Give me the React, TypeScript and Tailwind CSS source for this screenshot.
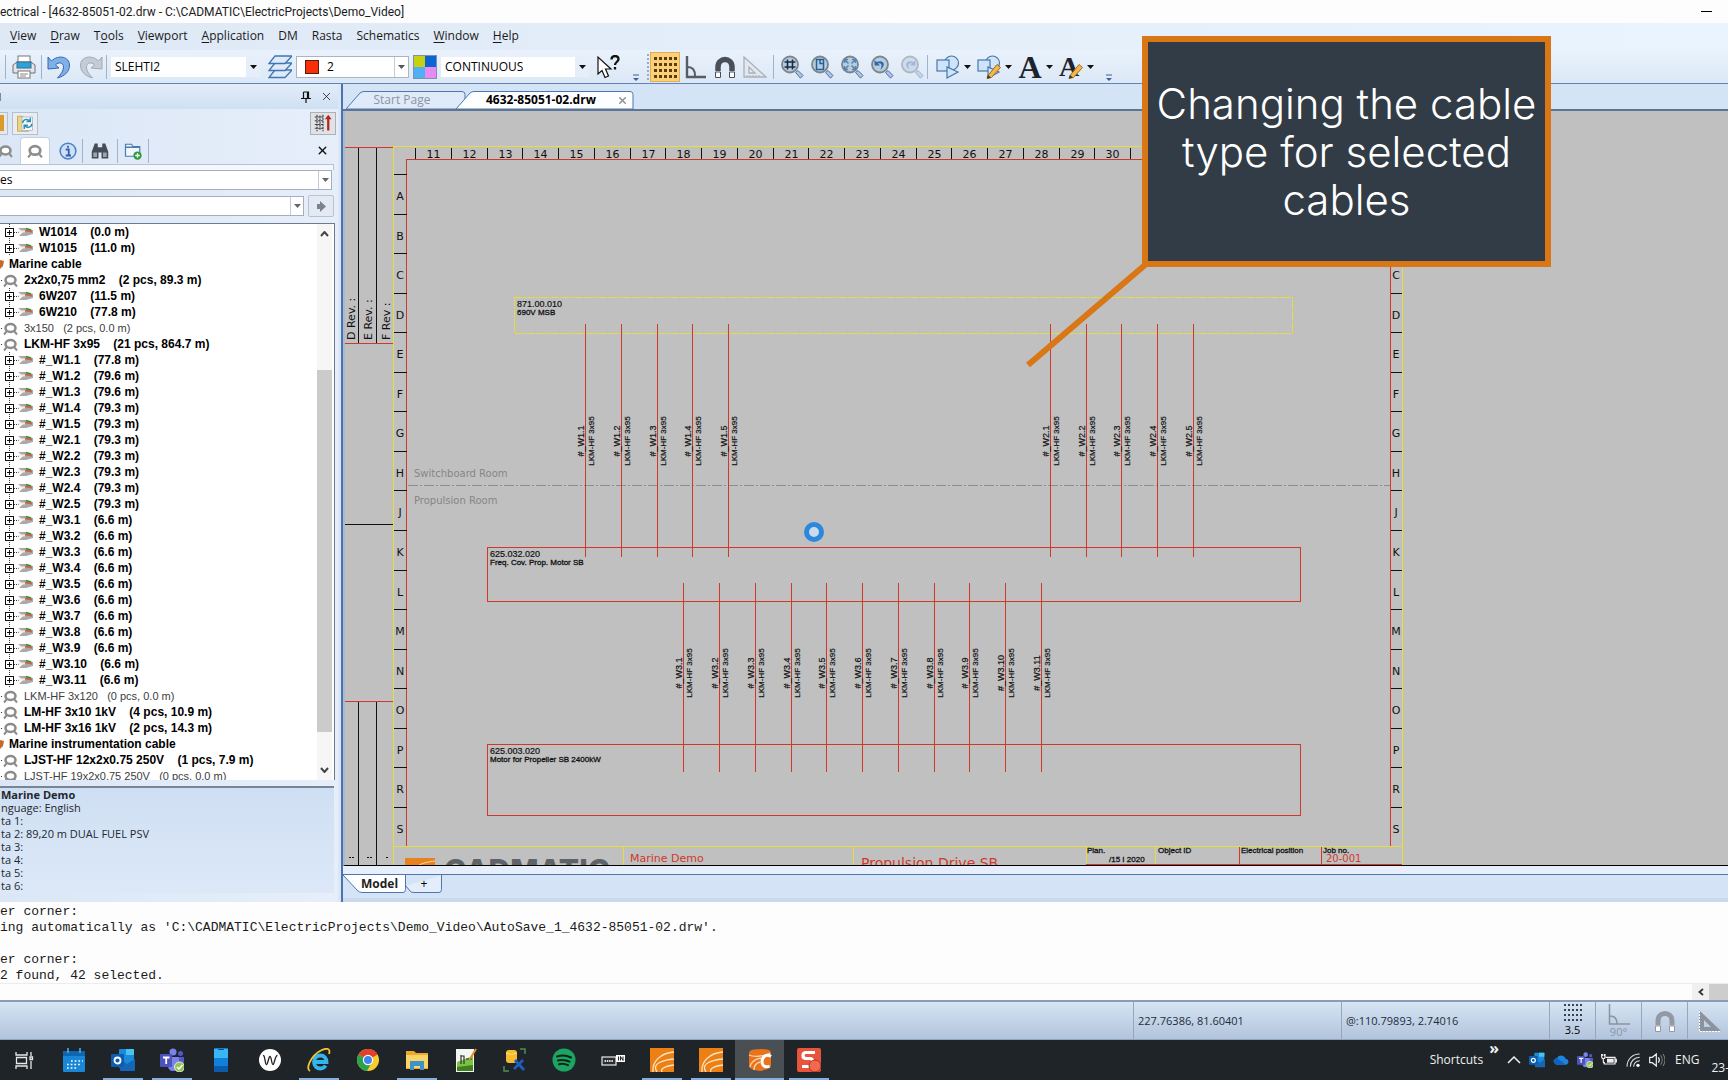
import type { ReactNode } from 'react';
import { X } from 'lucide-react';

const MENUS: [string, string, string][] = [
  ['', 'V', 'iew'],
  ['', 'D', 'raw'],
  ['T', 'o', 'ols'],
  ['', 'V', 'iewport'],
  ['', 'A', 'pplication'],
  ['DM', '', ''],
  ['Rasta', '', ''],
  ['Schematics', '', ''],
  ['', 'W', 'indow'],
  ['', 'H', 'elp'],
];

type Row = { kind: 'group' | 'type' | 'cable'; name: string; info?: string; unused?: boolean };

const cable = (name: string, len: string): Row => ({ kind: 'cable', name, info: `(${len} m)` });

const TREE: Row[] = [
  cable('W1014', '0.0'),
  cable('W1015', '11.0'),
  { kind: 'group', name: 'Marine cable' },
  { kind: 'type', name: '2x2x0,75 mm2', info: '(2 pcs, 89.3 m)' },
  cable('6W207', '11.5'),
  cable('6W210', '77.8'),
  { kind: 'type', name: '3x150', info: '(2 pcs, 0.0 m)', unused: true },
  { kind: 'type', name: 'LKM-HF 3x95', info: '(21 pcs, 864.7 m)' },
  cable('#_W1.1', '77.8'),
  cable('#_W1.2', '79.6'),
  cable('#_W1.3', '79.6'),
  cable('#_W1.4', '79.3'),
  cable('#_W1.5', '79.3'),
  ...[1, 2, 3, 4, 5].map(n => cable(`#_W2.${n}`, '79.3')),
  ...[1, 2, 3, 4, 5, 6, 7, 8, 9, 10, 11].map(n => cable(`#_W3.${n}`, '6.6')),
  { kind: 'type', name: 'LKM-HF 3x120', info: '(0 pcs, 0.0 m)', unused: true },
  { kind: 'type', name: 'LM-HF 3x10 1kV', info: '(4 pcs, 10.9 m)' },
  { kind: 'type', name: 'LM-HF 3x16 1kV', info: '(2 pcs, 14.3 m)' },
  { kind: 'group', name: 'Marine instrumentation cable' },
  { kind: 'type', name: 'LJST-HF 12x2x0.75 250V', info: '(1 pcs, 7.9 m)' },
  { kind: 'type', name: 'LJST-HF 19x2x0.75 250V', info: '(0 pcs, 0.0 m)', unused: true },
];

/* ── Small shared bits ───────────────────────────────────────── */

function Icon({ size = 24, children }: { size?: number; children: ReactNode }) {
  return (
    <svg width={size} height={size} viewBox="0 0 24 24" fill="none" className="shrink-0" aria-hidden>
      {children}
    </svg>
  );
}

function Caret({ color = '#111' }: { color?: string }) {
  return (
    <svg width="7" height="4" viewBox="0 0 7 4" className="shrink-0" aria-hidden>
      <path d="M0 0h7L3.5 4z" fill={color} />
    </svg>
  );
}

function Tool({ label, className = 'w-[30px]', children }: { label: string; className?: string; children: ReactNode }) {
  return (
    <button aria-label={label} className={`flex h-[30px] shrink-0 items-center justify-center gap-1 ${className}`}>
      {children}
    </button>
  );
}

const Sep = () => <span className="h-6 w-px shrink-0 bg-[#9fb3cc]" />;

const Overflow = () => (
  <svg width="8" height="8" viewBox="0 0 8 8" className="shrink-0 self-end" aria-hidden>
    <path d="M1 1h6" stroke="#3f5f96" />
    <path d="M1 4h6L4 7z" fill="#3f5f96" />
  </svg>
);

function Lens({ faded, children }: { faded?: boolean; children: ReactNode }) {
  return (
    <Icon>
      <g opacity={faded ? 0.5 : 1}>
        <path d="M15.500 17.500l2.500-2 5 5-2.500 2.700z" fill="#a9c4e8" stroke="#54709c" />
        <circle cx="10" cy="9.500" r="8" fill="#b9ccdc" stroke="#7b858f" strokeWidth="1.800" />
        {children}
      </g>
    </Icon>
  );
}

const Shapes = () => (
  <g fill="#cfe4f8" stroke="#4478ad" strokeWidth="1.200">
    <circle cx="15.500" cy="8" r="7" />
    <rect x="1" y="5" width="12" height="11" />
    <path d="M11 12v11l11-6z" />
  </g>
);

const Pencil = () => (
  <g>
    <path d="M11 20.500l9-11 3.500 3-9 10-4.500 1z" fill="#f3b84c" stroke="#a06a1c" />
    <path d="M10 23.500l1-3.500 3 2.500z" fill="#333" />
  </g>
);

/* ── Toolbar ─────────────────────────────────────────────────── */

function Toolbar() {
  const dots = [0, 1, 2, 3];
  return (
    <div className="flex h-[34px] shrink-0 items-center border-b border-[#5f84b5] bg-gradient-to-b from-[#e9f2fc] to-[#dce8f6] text-[12px]">
      <div className="flex w-[640px] shrink-0 items-center pl-[5px]">
        <Sep />
        <Tool label="Print" className="w-[35px]">
          <Icon>
            <rect x="6" y="1" width="12" height="8" fill="#fff" stroke="#777" />
            <path d="M1 10l4-3h14l4 3v8H1z" fill="#e3e5e8" stroke="#6c7176" />
            <rect x="5" y="7" width="14" height="6" fill="#2fa0d8" stroke="#39718f" />
            <rect x="6" y="16" width="12" height="7" fill="#fff" stroke="#777" />
            <path d="M8 19h8M8 21h6" stroke="#888" />
          </Icon>
        </Tool>
        <Sep />
        <Tool label="Undo" className="w-[34px]">
          <Icon>
            <path d="M1 2v12l11-1-3.500-3c3-3.500 8-2.500 8 2 0 4-2.500 7-6 11 7-2 12-6 12-13 0-8-11-11-18-4z" fill="#7fb0e8" stroke="#3767ab" />
          </Icon>
        </Tool>
        <Tool label="Redo" className="w-[30px]">
          <Icon>
            <path d="M23 2v12l-11-1 3.500-3c-3-3.500-8-2.500-8 2 0 4 2.500 7 6 11-7-2-12-6-12-13 0-8 11-11 18-4z" fill="#c5ccd6" stroke="#a0a9b6" />
          </Icon>
        </Tool>
        <Sep />
        <div className="relative ml-1 w-[149px]">
          <select aria-label="Layer" className="block h-5 w-full appearance-none bg-white pl-1 font-['Open_Sans',sans-serif] text-[12px] text-black">
            <option>SLEHTI2</option>
          </select>
          <span className="pointer-events-none absolute inset-y-0 right-0 flex w-[14px] items-center justify-center bg-[#e6eefa]"><Caret /></span>
        </div>
        <Tool label="Layers" className="ml-[3px] w-[33px]">
          <Icon>
            <g fill="#dfeaf8" stroke="#4076b5" strokeWidth="1.300">
              <path d="M7 15h17l-7 7.500H1z" />
              <path d="M7 8h17l-7 7.500H1z" />
              <path d="M7 1h17l-7 7.500H1z" />
            </g>
          </Icon>
        </Tool>
        <div className="relative w-[113px]">
          <select aria-label="Color" className="block h-[22px] w-full appearance-none border border-[#a9b4c4] bg-white pl-[30px] font-['Open_Sans',sans-serif] text-[12px] text-black">
            <option>2</option>
          </select>
          <span className="pointer-events-none absolute top-1 left-[9px] size-[14px] border border-[#5a1c10] bg-[#f8300a]" />
          <span className="pointer-events-none absolute inset-y-px right-px flex w-[14px] items-center justify-center border-l border-[#c4cbd6]"><Caret color="#555" /></span>
        </div>
        <button aria-label="Palette" className="mx-1 grid size-6 shrink-0 grid-cols-2 border border-[#7a90b4]">
          <span className="bg-[#c8d012]" />
          <span className="bg-[#0a64d2]" />
          <span className="bg-[#4fb0f5]" />
          <span className="bg-[#e68bf2]" />
        </button>
        <div className="relative w-[148px]">
          <select aria-label="Line type" className="block h-5 w-full appearance-none bg-white pl-1 font-['Open_Sans',sans-serif] text-[12px] text-black">
            <option>CONTINUOUS</option>
          </select>
          <span className="pointer-events-none absolute inset-y-0 right-0 flex w-[14px] items-center justify-center bg-[#e6eefa]"><Caret /></span>
        </div>
        <Tool label="Context help" className="ml-1 w-[30px]">
          <Icon>
            <path d="M2 2v17l4-3.500 3 7 3.500-1.500-3-7H15z" fill="#fff" stroke="#111" strokeWidth="1.200" />
            <path d="M15.500 4.500c0-4.500 7-4.500 7-.5 0 3-3.500 3-3.500 6M19 12v2.500" stroke="#111" strokeWidth="2.300" />
          </Icon>
        </Tool>
        <div className="ml-auto flex h-[30px]"><Overflow /></div>
      </div>

      <div className="flex items-center pl-[7px]">
        <span className="mr-px h-[26px] border-l-2 border-dotted border-[#9aaac0]" />
        <Tool label="Grid" className="w-[30px] border border-[#e0ae52] bg-[#fbd078]">
          <Icon>
            {[0, 1, 2, 3, 4].map(x => dots.map(y => (
              <rect key={`${x}-${y}`} x={1 + x * 5} y={2 + y * 6} width="3" height="3" fill="#5a3c08" />
            )))}
          </Icon>
        </Tool>
        <Tool label="Ortho">
          <Icon>
            <path d="M4 1v21h19" stroke="#585c64" strokeWidth="2.400" />
            <path d="M5 12c5 0 7 4 7 9" stroke="#585c64" strokeWidth="2" />
          </Icon>
        </Tool>
        <Tool label="Snap">
          <Icon>
            <path d="M5 16v-4c0-10 14-10 14 0v4" stroke="#4b5058" strokeWidth="5.500" />
            <path d="M2.500 17h5v5.500h-5zM16.500 17h5v5.500h-5z" fill="#fff" stroke="#4b5058" />
          </Icon>
        </Tool>
        <Tool label="Set square">
          <Icon>
            <path fillRule="evenodd" d="M1 2v20h22zM6 12v6h6z" fill="#e3e8ef" stroke="#a9b1bd" strokeWidth="1.300" />
            <path d="M4 22v-2m3 2v-2m3 2v-2m3 2v-2m3 2v-2" stroke="#a9b1bd" />
          </Icon>
        </Tool>
        <span className="mr-[3px] ml-[3px] flex"><Sep /></span>
        <Tool label="Zoom window">
          <Lens><path d="M7.500 4.500v10m5-10v10m-8-7.500h11m-11 5h11" stroke="#1b2c45" strokeWidth="1.600" /></Lens>
        </Tool>
        <Tool label="Zoom page">
          <Lens><path d="M6.500 4.500h7v10h-7zM10 4.500v4h3.500" stroke="#23619a" strokeWidth="1.500" /></Lens>
        </Tool>
        <Tool label="Zoom extents">
          <Lens><path d="M5 5l3.500 3.500M15 5l-3.500 3.500M5 14l3.500-3.500M15 14l-3.500-3.500M4.500 8V4.500H8M12 4.500h3.500V8M4.500 11v3.500H8M12 14.500h3.500V11" stroke="#5485b5" strokeWidth="1.500" /></Lens>
        </Tool>
        <Tool label="Zoom previous">
          <Lens><path d="M4.500 5v5.500H10L8 8.500c4-1.500 4.500 3 2 6.500 6-4 5-11-3.500-8z" fill="#2c6aac" /></Lens>
        </Tool>
        <Tool label="Zoom next">
          <Lens faded><path d="M15.500 5v5.500H10l2-2c-4-1.500-4.500 3-2 6.500-6-4-5-11 3.500-8z" fill="#6a7fb8" /></Lens>
        </Tool>
        <Sep />
        <Tool label="Shapes" className="ml-[5px] w-[41px]"><Icon><Shapes /></Icon><Caret /></Tool>
        <Tool label="Edit shapes" className="w-[41px]"><Icon><Shapes /><Pencil /></Icon><Caret /></Tool>
        <Tool label="Text" className="w-[41px]">
          <span className="w-6 text-center font-['Liberation_Serif',serif] text-[32px] leading-6 font-bold text-[#1c232c]">A</span><Caret />
        </Tool>
        <Tool label="Edit text" className="w-[41px]">
          <span className="relative w-6 text-left font-['Liberation_Serif',serif] text-[28px] leading-6 font-bold text-[#1c232c]">
            A
            <span className="absolute inset-0"><Icon><Pencil /></Icon></span>
          </span>
          <Caret />
        </Tool>
        <div className="ml-2 flex h-[30px]"><Overflow /></div>
      </div>
    </div>
  );
}

/* ── Project panel ───────────────────────────────────────────── */

const Ring = () => (
  <g>
    <path d="M6.500 11.500l-2.500 3M14.500 11.500l2.500 3" stroke="#8d8d8d" strokeWidth="2" />
    <ellipse cx="10.500" cy="8" rx="5" ry="4" fill="#fff" stroke="#8d8d8d" strokeWidth="2.600" />
  </g>
);

function TreeRow({ row }: { row: Row }) {
  return (
    <li className="flex h-4 items-center whitespace-pre">
      {row.kind === 'cable' && (
        <svg width="39" height="16" viewBox="0 0 39 16" fill="none" className="shrink-0" aria-hidden>
          <path d="M9.500 0v16M14 8.500h5" stroke="#333" strokeDasharray="1 1" />
          <rect x="5.500" y="4.500" width="8" height="8" fill="#fff" stroke="#111" shapeRendering="crispEdges" />
          <path d="M7 8.500h5M9.500 6v5" stroke="#111" shapeRendering="crispEdges" />
          <path d="M18 4h8l7 2v4l-7 2h-7l4-4z" fill="#a9aaa8" />
          <path d="M18 7.500h7" stroke="#eee" strokeWidth="2" />
          <path d="M25 6.500l7 1" stroke="#c26b4c" strokeWidth="2" />
          <path d="M26 4.500l5 1.500" stroke="#3f8a3a" strokeWidth="1.500" />
        </svg>
      )}
      {row.kind === 'type' && (
        <svg width="24" height="16" viewBox="0 0 24 16" fill="none" className="shrink-0" aria-hidden>
          <path d="M1 8.500h2" stroke="#333" strokeDasharray="1 1" />
          <Ring />
        </svg>
      )}
      {row.kind === 'group' && (
        <svg width="9" height="16" viewBox="0 0 9 16" className="shrink-0" aria-hidden>
          <path d="M0 4l4 1-1 5-3 3z" fill="#c8672a" />
        </svg>
      )}
      {row.unused
        ? <span className="text-[11px] text-[#3d3d3d]">{`${row.name}   ${row.info}`}</span>
        : <span className="font-bold text-black">{row.info ? `${row.name}    ${row.info}` : row.name}</span>}
    </li>
  );
}

function ProjectPanel() {
  return (
    <aside className="flex w-[338px] shrink-0 flex-col bg-gradient-to-r from-[#dbe7f6] to-[#e6eefa] font-['Open_Sans',sans-serif] text-[12px]">
      <div className="flex h-[25px] shrink-0 items-center gap-[9px] bg-gradient-to-b from-[#e2edf9] to-[#cfe0f3] pr-[5px]">
        <span className="h-2 w-px bg-[#7a8ba3]" />
        <button aria-label="Pin" className="ml-auto">
          <svg width="10" height="12" viewBox="0 0 10 12" fill="none" aria-hidden>
            <path d="M2.500 1h5v6M2.500 1v6M0 7.500h10M5 8v4M6.500 1v6" stroke="#111" strokeWidth="1.200" />
          </svg>
        </button>
        <button aria-label="Close panel"><X size={13} strokeWidth={1.400} color="#111" /></button>
      </div>

      <div className="flex h-7 shrink-0 items-center pr-[2px]">
        <button aria-label="Open" className="h-[23px] w-2 border border-l-0 border-[#b7bfca] bg-[#e4e8ee]"><span className="block h-4 w-1 bg-[#d99c2b]" /></button>
        <button aria-label="Reload" className="ml-1 flex h-[23px] w-[26px] items-center justify-center border border-[#b7bfca] bg-[#e9edf3]">
          <Icon size={18}>
            <path d="M2 3h7l2 2h6v18H2z" fill="#ecd487" stroke="#bd9c40" />
            <rect x="8" y="4" width="14" height="18" fill="#f5f9fc" stroke="#9fb1c0" />
            <path d="M9 12c0-5 6-6 9-3M21 13c0 5-6 6-9 3M19 5v5h-5M11 20v-5h5" stroke="#2f8fb0" strokeWidth="2" />
          </Icon>
        </button>
        <button aria-label="Sort" className="ml-auto flex h-[23px] w-[26px] items-center justify-center border border-[#b0b0b0] bg-[#dfe2e6]">
          <Icon size={18}>
            <path d="M4 1v22M1 4h12M1 9h12M1 14h12M1 19h12M12 1v22M8 2v20" stroke="#444" strokeDasharray="3 1" strokeWidth="1.500" />
            <path d="M17.500 22V7h-3L19 1l4.500 6h-3v15z" fill="#b5231c" />
          </Icon>
        </button>
      </div>

      <div className="flex h-[27px] shrink-0 items-center">
        <button aria-label="Cables" className="w-[20px]">
          <svg width="18" height="18" viewBox="5 0 18 17" fill="none" aria-hidden><Ring /></svg>
        </button>
        <button aria-label="Cable types" className="flex h-full w-[30px] items-center justify-center rounded-t border border-b-0 border-[#c6cfdb] bg-white">
          <svg width="18" height="18" viewBox="2 0 17 17" fill="none" aria-hidden><Ring /></svg>
        </button>
        <button aria-label="Info" className="flex w-8 items-center justify-center pl-1">
          <Icon size={18}>
            <circle cx="12" cy="12" r="10.500" fill="#cfdff6" stroke="#4d7fc4" strokeWidth="2" />
            <path d="M9 10h4v8M9 18h7M12 5v2.500" stroke="#2f5fae" strokeWidth="2.400" />
          </Icon>
        </button>
        <Sep />
        <button aria-label="Find" className="flex w-[34px] items-center justify-center">
          <Icon size={18}>
            <path d="M5 2h4v5h6V2h4l4 11v9h-9v-8h-4v8H1v-9z" fill="#454c56" />
            <path d="M3 14h5v6H3zM16 14h5v6h-5z" fill="#98a2b0" />
          </Icon>
        </button>
        <Sep />
        <button aria-label="New folder" className="flex w-[30px] items-center justify-center">
          <Icon size={18}>
            <path d="M2 3h8l2 3h9v13H2z" fill="#f2f7fc" stroke="#4a7bb0" strokeWidth="1.600" />
            <path d="M2 7h19" stroke="#4a7bb0" strokeWidth="2" />
            <circle cx="18" cy="18" r="5.500" fill="#2e9a3a" />
            <path d="M15 18h6M18 15v6" stroke="#fff" strokeWidth="1.800" />
          </Icon>
        </button>
        <Sep />
        <button aria-label="Close tabs" className="mr-[9px] ml-auto"><X size={13} strokeWidth={2.600} color="#111" /></button>
      </div>

      <div className="mr-1 h-[6px] shrink-0 border-t border-r border-[#b7c3d4] bg-[#f4f8fd]" />
      <div className="relative mr-[6px]">
        <select aria-label="View" className="block h-5 w-full appearance-none border border-l-0 border-[#a5aebb] bg-white text-[12px] text-black">
          <option>es</option>
        </select>
        <span className="pointer-events-none absolute inset-y-px right-px flex w-[13px] items-center justify-center border-l border-[#c4cbd6]"><Caret color="#666" /></span>
      </div>
      <div className="mt-[5px] flex shrink-0 items-center gap-1">
        <div className="relative w-[304px]">
          <input aria-label="Filter" className="block h-5 w-full border border-l-0 border-[#a5aebb] bg-white" />
          <span className="pointer-events-none absolute inset-y-px right-px flex w-[13px] items-center justify-center border-l border-[#c4cbd6]"><Caret color="#666" /></span>
        </div>
        <button aria-label="Go" className="flex h-[22px] w-[26px] items-center justify-center rounded-xs border border-[#b9c2cf] bg-[#e4eaf3]">
          <svg width="9" height="11" viewBox="0 0 9 11" aria-hidden><path d="M0 3h3V0l6 5.500L3 11V8H0z" fill="#7c828b" /></svg>
        </button>
      </div>

      <div className="mt-[6px] mr-[3px] flex min-h-0 flex-1 border-t border-r border-[#6f7b8a] bg-white font-['Liberation_Sans',sans-serif]">
        <ul className="min-w-0 flex-1 overflow-hidden">
          {TREE.map(row => <TreeRow key={row.name} row={row} />)}
        </ul>
        <div className="mr-[2px] flex w-[15px] flex-col items-center bg-[#f6f6f6] py-[7px]">
          <svg width="9" height="6" viewBox="0 0 9 6" fill="none" aria-hidden><path d="M1 5l3.500-4L8 5" stroke="#444" strokeWidth="2" /></svg>
          <div className="mt-[133px] h-[362px] w-full bg-[#cbcbcb]" />
          <svg width="9" height="6" viewBox="0 0 9 6" fill="none" className="mt-auto" aria-hidden><path d="M1 1l3.500 4L8 1" stroke="#444" strokeWidth="2" /></svg>
        </div>
      </div>

      <div className="mt-[6px] mr-1 mb-[9px] shrink-0 border-t-2 border-[#7a8493] bg-gradient-to-b from-[#cfdff3] to-[#dce8f8] pb-px pl-px text-[11px] leading-[13px] text-[#22272e]">
        <p className="font-bold">Marine Demo</p>
        <p>nguage: English</p>
        <p>ta 1:</p>
        <p>ta 2: 89,20 m DUAL FUEL PSV</p>
        <p>ta 3:</p>
        <p>ta 4:</p>
        <p>ta 5:</p>
        <p>ta 6:</p>
      </div>
    </aside>
  );
}

/* ── Drawing sheet ───────────────────────────────────────────── */

const RED = '#d0392a';
const YELLOW = '#e6de3c';
const ROW_LETTERS = 'ABCDEFGHJKLMNOPRS'.split('');
const COL_PITCH = 35.76;
const ROW_PITCH = 39.55;

function CableLine({ x, y1, y2, mid, name }: { x: number; y1: number; y2: number; mid: number; name: string }) {
  return (
    <g>
      <path d={`M${x} ${y1}V${y2}`} stroke={RED} shapeRendering="crispEdges" />
      <g textAnchor="middle" stroke="#111" strokeWidth="0.200">
        <text fontSize="9" transform={`translate(${x - 2} ${mid}) rotate(-90)`}>{name}</text>
        <text fontSize="8" transform={`translate(${x + 8} ${mid}) rotate(-90)`}>LKM-HF 3x95</text>
      </g>
    </g>
  );
}

function Sheet() {
  return (
    <svg
      viewBox="345 111 1383 754"
      preserveAspectRatio="xMinYMin slice"
      className="block h-full w-full font-['Liberation_Sans',sans-serif]"
      fill="#111"
      role="img"
      aria-label="Cable diagram"
    >
      {/* revision columns */}
      <g stroke="#111" shapeRendering="crispEdges">
        <path d="M358.500 147v196M376.500 147v196M358.500 701v164M376.500 701v164M345 524.500h48" />
      </g>
      <g stroke={RED} fill="none" shapeRendering="crispEdges">
        <path d="M345 147.500h48M345 343.500h48M345 701.500h48" />
        <path d="M406.500 847V159.500H1390.500V847" />
      </g>
      <g fontSize="11" className="font-['DejaVu_Sans',sans-serif]">
        <text transform="translate(355 340) rotate(-90)">D Rev. :</text>
        <text transform="translate(372 340) rotate(-90)">E Rev. :</text>
        <text transform="translate(390 340) rotate(-90)">F Rev :</text>
      </g>
      <path d="M349 857.500h5M367 857.500h5M386 857.500h2" stroke="#111" strokeDasharray="2 1" />

      {/* outer frame and title block rules */}
      <g stroke={YELLOW} fill="none" shapeRendering="crispEdges">
        <path d="M393.500 866V146.500H1402.500V866M393 846.500H1403M623.500 847v18M853.500 847v18M1086.500 847v18M1155.500 847v18" />
        <rect x="514.500" y="297.500" width="778" height="36" strokeDasharray="8 1 2 1" />
      </g>

      {/* column numbers */}
      <g fontSize="11" textAnchor="middle" className="font-['DejaVu_Sans',sans-serif]">
        {Array.from({ length: 20 }, (_, i) => {
          const x = Math.round(415 + i * COL_PITCH) + 0.5;
          return (
            <g key={i}>
              <path d={`M${x} 148v11`} stroke="#111" shapeRendering="crispEdges" />
              <text x={x + 18} y="158">{11 + i}</text>
            </g>
          );
        })}
        <path d="M1130.500 148v11" stroke="#111" shapeRendering="crispEdges" />
      </g>

      {/* row letters, both sides */}
      <g fontSize="11" textAnchor="middle" className="font-['DejaVu_Sans',sans-serif]">
        {ROW_LETTERS.map((letter, i) => {
          const y = Math.round(174 + i * ROW_PITCH) + 0.5;
          return (
            <g key={letter}>
              <path d={`M394 ${y}h13M1391 ${y}h11`} stroke="#111" shapeRendering="crispEdges" />
              <text x="400" y={y + 25}>{letter}</text>
              {i > 1 && <text x="1396" y={y + 25}>{letter}</text>}
            </g>
          );
        })}
      </g>

      {/* room divider */}
      <path d="M408 485.500H1390" stroke="#8d8d8d" strokeDasharray="10 2 2 2" />
      <g fontSize="10" fill="#868686" className="font-['DejaVu_Sans',sans-serif]">
        <text x="414" y="477">Switchboard Room</text>
        <text x="414" y="504">Propulsion Room</text>
      </g>

      {/* equipment */}
      <g stroke={RED} fill="none" shapeRendering="crispEdges">
        <rect x="487.500" y="547.500" width="813" height="54" />
        <rect x="487.500" y="744.500" width="813" height="71" />
      </g>
      <g fontSize="9" stroke="#111" strokeWidth="0.200">
        <text x="517" y="307">871.00.010</text>
        <text x="490" y="557">625.032.020</text>
        <text x="490" y="754">625.003.020</text>
      </g>
      <g fontSize="8" stroke="#111" strokeWidth="0.300">
        <text x="517" y="315">690V MSB</text>
        <text x="490" y="565">Freq. Cov. Prop. Motor SB</text>
        <text x="490" y="762">Motor for Propeller SB 2400kW</text>
      </g>

      {[585, 621, 657, 692, 728].map((x, i) => (
        <CableLine key={x} x={x + 0.5} y1={324} y2={557} mid={441} name={`#_W1.${i + 1}`} />
      ))}
      {[1050, 1086, 1121, 1157, 1193].map((x, i) => (
        <CableLine key={x} x={x + 0.5} y1={324} y2={557} mid={441} name={`#_W2.${i + 1}`} />
      ))}
      {[683, 719, 755, 791, 826, 862, 898, 934, 969, 1005, 1041].map((x, i) => (
        <CableLine key={x} x={x + 0.5} y1={583} y2={772} mid={673} name={`#_W3.${i + 1}`} />
      ))}

      {/* title block */}
      <path d="M405 858h30v7h-30z" fill="#e8821e" />
      <path d="M418 866c4-3 9-4 17-5" stroke="#f6d9b5" fill="none" />
      <text x="444" y="881" fontSize="30" fontWeight="800" fill="#5f6266" className="font-['Inter',sans-serif]">CADMATIC</text>
      <g fill={RED} className="font-['DejaVu_Sans',sans-serif]">
        <text x="630" y="862" fontSize="11">Marine Demo</text>
        <text x="861" y="868" fontSize="14">Propulsion Drive SB</text>
        <text x="1326" y="862" fontSize="10">20-001</text>
      </g>
      <g fontSize="8" stroke="#111" strokeWidth="0.300">
        <text x="1087" y="853">Plan.</text>
        <text x="1109" y="862">/15 I 2020</text>
        <text x="1158" y="853">Object ID</text>
        <text x="1241" y="853">Electrical position</text>
        <text x="1323" y="853">Job no.</text>
      </g>
      <path d="M1086 864.500H1402M1239.500 847v18M1321.500 847v18" stroke={RED} shapeRendering="crispEdges" />

      {/* busy cursor */}
      <circle cx="814" cy="532" r="7.500" fill="#c9dcec" stroke="#2d87dc" strokeWidth="5" />
    </svg>
  );
}

function Workspace() {
  return (
    <main className="flex min-w-0 flex-1 flex-col border-l-2 border-[#4a74b0] bg-[#d5e3f7] font-['Open_Sans',sans-serif] text-[12px]">
      <div className="flex h-[27px] shrink-0 items-end border-b-2 border-[#5c7596] pl-[3px]">
        <button className="relative h-[18px] w-[120px] pr-2 text-[#8d949e]">
          <svg viewBox="0 0 120 18" preserveAspectRatio="none" className="absolute inset-0 h-full w-full" aria-hidden>
            <path d="M0 18L14 2q2-1.500 4-1.500h98q3 0 3 3V18z" fill="#dfeafa" stroke="#4d78ae" />
          </svg>
          <span className="relative">Start Page</span>
        </button>
        <button className="relative -ml-[10px] flex h-[18px] w-[178px] items-center pl-[30px] font-bold text-black">
          <svg viewBox="0 0 178 18" preserveAspectRatio="none" className="absolute inset-0 h-full w-full" aria-hidden>
            <path d="M0 18L14 2q2-1.500 4-1.500h156q3 0 3 3V18z" fill="#fdfeff" stroke="#4d78ae" />
          </svg>
          <span className="relative">4632-85051-02.drw</span>
          <X size={11} strokeWidth={3} color="#8b8f96" className="relative mr-[6px] ml-auto" />
        </button>
      </div>
      <div className="min-h-0 flex-1 overflow-hidden border-b border-l-2 border-b-black border-l-[#a9b9d0] bg-[#c0c0c0]"><Sheet /></div>
      <div className="h-[9px] shrink-0 border-b border-[#4d78ae] bg-[#e6effb]" />
      <div className="flex h-[27px] shrink-0 items-start border-b-4 border-[#cbd9ea]">
        <button className="relative h-[18px] w-[63px] pl-[10px] font-bold text-[#222]">
          <svg viewBox="0 0 63 18" preserveAspectRatio="none" className="absolute inset-0 h-full w-full" aria-hidden>
            <path d="M0 0l14 15q2 2.500 5 2.500h41q2.500 0 2.500-3V0" fill="#fff" stroke="#4d78ae" />
          </svg>
          <span className="relative">Model</span>
        </button>
        <button aria-label="Add layout" className="relative h-[18px] w-9 text-black">
          <svg viewBox="0 0 36 18" preserveAspectRatio="none" className="absolute inset-0 h-full w-full" aria-hidden>
            <path d="M0 11l4 5q1 1.500 4 1.500h25q2.500 0 2.500-3V0" fill="#e3edfb" stroke="#4d78ae" />
          </svg>
          <span className="relative">+</span>
        </button>
      </div>
    </main>
  );
}

/* ── Console and status bar ──────────────────────────────────── */

function Console() {
  return (
    <section className="h-[100px] shrink-0 border-b-2 border-[#8a9db6] bg-[#fdfdfd]">
      <pre className="h-[82px] overflow-hidden border-b border-[#ececec] pt-[2px] font-['Liberation_Mono',monospace] text-[13px] leading-4 text-[#1a1a1a]">
        {`er corner:
ing automatically as 'C:\\CADMATIC\\ElectricProjects\\Demo_Video\\AutoSave_1_4632-85051-02.drw'.

er corner:
2 found, 42 selected.`}
      </pre>
      <div className="flex h-4 justify-end">
        <button aria-label="Scroll left" className="flex w-[17px] items-center justify-center bg-[#f0f0f0]">
          <svg width="6" height="8" viewBox="0 0 6 8" fill="none" aria-hidden><path d="M5 1L1.500 4 5 7" stroke="#333" strokeWidth="1.800" /></svg>
        </button>
        <span className="w-[19px] bg-[#cdcdcd]" />
      </div>
    </section>
  );
}

function StatusBar() {
  const cell = 'flex h-full flex-col items-center justify-center border-l border-[#93a7c2]';
  return (
    <footer className="flex h-[38px] shrink-0 items-center justify-end overflow-hidden border-b border-[#8ea3bd] bg-gradient-to-b from-[#d6e4f3] to-[#b2c4dc] font-['Open_Sans',sans-serif] text-[11px] text-[#1f2c3d]">
      <span className="flex h-full w-[208px] shrink-0 items-center border-l border-[#93a7c2] pt-[2px] pl-1">227.76386, 81.60401</span>
      <span className="flex h-full w-[208px] shrink-0 items-center border-l border-[#93a7c2] pt-[2px] pl-1">@:110.79893, 2.74016</span>
      <button className={`${cell} w-[46px] shrink-0`}>
        <svg width="18" height="18" viewBox="0 0 18 18" aria-hidden>
          {[0, 1, 2, 3, 4].map(x => [0, 1, 2, 3].map(y => (
            <rect key={`${x}-${y}`} x={x * 4} y={y * 5} width="2" height="2" fill="#39424f" />
          )))}
        </svg>
        <span className="leading-4 text-black">3.5</span>
      </button>
      <button className={`${cell} w-[46px] shrink-0 text-[#8a95a5]`}>
        <svg width="22" height="22" viewBox="0 0 22 22" fill="none" aria-hidden>
          <path d="M1.500 0v20H22M2 12c5 0 7 3 7 8" stroke="#8a93a0" strokeWidth="1.500" />
        </svg>
        <span className="leading-3">90°</span>
      </button>
      <button aria-label="Object snap" className={`${cell} w-[46px] shrink-0`}>
        <Icon>
          <path d="M5 16v-4c0-10 14-10 14 0v4" stroke="#9399a2" strokeWidth="5" />
          <path d="M2.500 17h5v5.500h-5zM16.500 17h5v5.500h-5z" fill="#fff" stroke="#9399a2" />
        </Icon>
      </button>
      <button aria-label="Set square" className={`${cell} w-[41px] shrink-0 pl-1`}>
        <Icon>
          <path fillRule="evenodd" d="M1 1v21h22zM6 11v7h7z" fill="#8c939e" />
          <path d="M1.500 2v20.500H22" stroke="#fff" strokeDasharray="2 1" />
        </Icon>
      </button>
    </footer>
  );
}

/* ── Taskbar ─────────────────────────────────────────────────── */

const OutlookArt = () => (
  <>
    <rect x="8" y="1" width="15" height="19" rx="1" fill="#1b8ad8" />
    <path d="M15 1h7q1 0 1 1v5h-8z" fill="#4cc2f2" />
    <path d="M9 11l7 5 8-5v11q0 1-1 1H10q-1 0-1-1z" fill="#1566b5" />
    <rect x="0" y="6" width="13" height="13" rx="1" fill="#0d5cb0" />
    <circle cx="6.500" cy="12.500" r="3" stroke="#fff" strokeWidth="1.800" />
  </>
);

const TeamsArt = () => (
  <>
    <circle cx="13" cy="4" r="3.500" fill="#7b83eb" />
    <circle cx="20.500" cy="5.500" r="2.500" fill="#5059c9" />
    <path d="M16 9h8v7q-1 4-6 4z" fill="#5059c9" />
    <path d="M8 9h11v8q0 6-6 6-5 0-5-6z" fill="#7b83eb" />
    <rect x="0" y="6" width="12" height="13" rx="1" fill="#4b53bc" />
    <path d="M3 9.500h6.500M6.200 9.500V16" stroke="#fff" strokeWidth="1.800" />
    <circle cx="19.500" cy="19" r="5" fill="#92c353" stroke="#e8f2da" />
    <path d="M17 19l2 2 3.500-4" stroke="#fff" strokeWidth="1.500" />
  </>
);

const CadArt = () => (
  <>
    <rect width="24" height="24" fill="#ec8014" />
    <path d="M3 24C2 14 10 5 24 4M7 24C1 15 14 12 24 11M12 24c-2-3 3-6 12-7" stroke="#fde4c4" strokeWidth="1.300" />
  </>
);

type TaskItem = { label: string; open?: boolean; active?: boolean; art: ReactNode };

const TASKS: TaskItem[] = [
  {
    label: 'Task View',
    art: <path d="M3 4v3h11V4M3 21v-3h11v3M3.500 9.500h10v6h-10zM18 4v4M18 13v8M17 9h2.500v2.500H17z" stroke="#e8e8e8" strokeWidth="1.300" />,
  },
  {
    label: 'Calendar',
    art: (
      <>
        <rect x="1" y="3" width="22" height="21" rx="1" fill="#1a86d6" />
        <path d="M1 3h22v5H1z" fill="#0f65b0" />
        <path d="M6 0v5M18 0v5" stroke="#52b4ee" strokeWidth="1.500" />
        <path d="M9 13h12M5 16.500h14M5 20h11" stroke="#fff" strokeWidth="1.700" strokeDasharray="1.700 2" />
      </>
    ),
  },
  { label: 'Outlook', open: true, art: <OutlookArt /> },
  { label: 'Teams', open: true, art: <TeamsArt /> },
  {
    label: 'Your Phone',
    art: (
      <>
        <rect x="5" y="0" width="14" height="24" rx="1" fill="#1180d8" />
        <path d="M5 1h14v9H5z" fill="#3bb6f5" />
        <path d="M5 18h14v6H5z" fill="#0a5cab" />
        <path d="M9 1.500h6" stroke="#0a4d90" />
      </>
    ),
  },
  {
    label: 'W app',
    art: (
      <>
        <circle cx="12" cy="12" r="11" fill="#fff" />
        <path d="M5 7.500c2-1 2 9 3.500 9s2-8 3.500-8 1.500 8 3 8S17 7 19.500 7.500" stroke="#222" strokeWidth="1.300" />
      </>
    ),
  },
  {
    label: 'Internet Explorer',
    open: true,
    art: (
      <>
        <path d="M6 14h13.500c0-4-2.500-6.500-6-6.500S7 10 7 14s3 6.500 6.500 6.500c2.500 0 4-1 5-3" stroke="#35b5ee" strokeWidth="3.800" />
        <path d="M3 23c-5-2 1-15 10-20 6-3.500 11-3 9 3" stroke="#f3c433" strokeWidth="1.800" />
      </>
    ),
  },
  {
    label: 'Chrome',
    art: (
      <>
        <circle cx="12" cy="12" r="11" fill="#f8cb2e" />
        <path d="M12 12L2.500 6.500A11 11 0 0 1 21.500 6.500z" fill="#e0412f" />
        <path d="M12 12L2.500 6.500A11 11 0 0 0 11 23l5-9z" fill="#2ba24c" />
        <path d="M12 7h9.800A11 11 0 0 0 12 1z" fill="#e0412f" />
        <circle cx="12" cy="12" r="5.200" fill="#fff" />
        <circle cx="12" cy="12" r="4" fill="#4284f0" />
      </>
    ),
  },
  {
    label: 'File Explorer',
    open: true,
    art: (
      <>
        <path d="M1 3h8l2 2h12v16H1z" fill="#f0a92c" />
        <path d="M1 7h22v13H1z" fill="#fbd468" />
        <path d="M5 13h14v9h-4v-4H9v4H5z" fill="#3d94cc" />
      </>
    ),
  },
  {
    label: 'Notepad++',
    art: (
      <>
        <rect x="2" y="1" width="18" height="23" fill="#f4f6f2" />
        <path d="M3 14l16-6v15H3z" fill="#7cc342" />
        <path d="M3 19l16-2v6H3z" fill="#3f7f22" />
        <path d="M7 7v9M7 8h3v8M12 11h3M16 11h2" stroke="#333" strokeWidth="1.200" />
        <path d="M22 1l-6 10" stroke="#e08a2a" strokeWidth="2" />
      </>
    ),
  },
  {
    label: 'Database tools',
    art: (
      <>
        <rect x="3" y="2" width="11" height="13" rx="3" fill="#f7bd2e" />
        <path d="M3 5q5 3 11 0" stroke="#fbe08c" />
        <path d="M17 1h5v5M1 18v5h5" stroke="#4f8f52" strokeWidth="1.500" />
        <path d="M11 21l9-9M12 12l9 10" stroke="#1c5fc0" strokeWidth="2.800" />
      </>
    ),
  },
  {
    label: 'Spotify',
    art: (
      <>
        <circle cx="12" cy="12" r="11.500" fill="#1aa562" />
        <path d="M5 8.500c5-1.500 10-1 14 1M6 12.500c4-1 8-.5 11.500 1.200M7 16.200c3-.8 6-.4 9 1" stroke="#10201a" strokeWidth="2" strokeLinecap="round" />
      </>
    ),
  },
  {
    label: 'TuneIn',
    art: (
      <>
        <rect x="1" y="9" width="14" height="8" stroke="#e8e8e8" strokeWidth="1.200" fill="#2a2d30" />
        <rect x="15" y="7" width="9" height="7" fill="#fff" />
        <path d="M3.500 13h9" stroke="#ddd" strokeWidth="2" strokeDasharray="1.500 .8" />
        <path d="M17.500 8.500v4M19.500 12.500v-4l2.500 4v-4" stroke="#222" />
      </>
    ),
  },
  { label: 'CADMATIC', open: true, art: <CadArt /> },
  { label: 'CADMATIC Hull', open: true, art: <CadArt /> },
  {
    label: 'CADMATIC Electrical',
    open: true,
    active: true,
    art: (
      <>
        <path d="M1 5q0-3 5-3.500 7-1 13 0 4 .5 4 3.500v13q0 3-11 5Q1 22 1 18z" fill="#e8731a" />
        <path d="M1 7c4 2 14 2 21-2M2 19C3 13 7 11 13 10M6 22c0-5 2-7 6-8" stroke="#fbd3ab" strokeWidth="1.300" />
        <path d="M23 8.500c-5-3-9 .5-9 5s4 6.500 7.500 4.500" stroke="#fff" strokeWidth="3" />
      </>
    ),
  },
  {
    label: 'Snagit',
    open: true,
    art: (
      <>
        <rect width="24" height="24" rx="2" fill="#e8553c" />
        <path d="M18 4.500H9q-3 0-3 3t3 3h4q3 0 3 4 0 4-4 4H5" stroke="#fff" strokeWidth="3.200" />
        <circle cx="18" cy="18" r="6" fill="#f4694c" stroke="#9d3524" />
      </>
    ),
  },
];

function Taskbar() {
  return (
    <nav className="flex h-10 shrink-0 overflow-hidden bg-[#1f2428] font-['Open_Sans',sans-serif] text-[12px] text-[#f0f0f0]">
      {TASKS.map(({ label, open, active, art }) => (
        <button
          key={label}
          aria-label={label}
          className={`relative flex w-[49px] shrink-0 items-center justify-center ${active ? 'bg-[#4a4f54]' : ''}`}
        >
          <Icon>{art}</Icon>
          {open && <span className={`absolute bottom-0 h-[2px] bg-[#86aede] ${active ? 'w-full' : 'w-10'}`} />}
        </button>
      ))}
      <div className="ml-auto flex shrink-0 items-center">
        <span>Shortcuts</span>
        <span className="ml-[6px] self-start text-[16px] leading-4 font-bold">»</span>
        <button aria-label="Hidden icons" className="ml-2">
          <svg width="14" height="8" viewBox="0 0 14 8" fill="none" aria-hidden><path d="M1 7l6-6 6 6" stroke="#eee" strokeWidth="1.500" /></svg>
        </button>
        <div className="ml-2 flex items-center gap-2">
          <Icon size={16}><OutlookArt /></Icon>
          <Icon size={16}>
            <path d="M5 19q-4-1-4-5 0-4 5-5 3-5 9-3 3 1 4 4 5 1 4 6-1 3-4 3z" fill="#1c84dc" />
            <path d="M1 14q0-4 5-5l13 10H5q-4-1-4-5z" fill="#0f63bd" />
          </Icon>
          <Icon size={16}><TeamsArt /></Icon>
          <Icon size={16}>
            <path d="M7 8h14v10H5v-3M21 11h2v4h-2M1 3v4q0 3 2.500 3T6 7V3M2 3v3M5 3v3M3.500 10v5q0 2 2 2" stroke="#eee" strokeWidth="1.800" />
            <rect x="9" y="10" width="10" height="6" fill="#eee" />
          </Icon>
          <Icon size={16}>
            <path d="M3 22C3 11 11 3 22 3M8 22c0-8 6-14 14-14M13 22c0-5 4-9 9-9" stroke="#ddd" strokeWidth="1.600" />
            <circle cx="19.500" cy="20" r="2.500" fill="#fff" />
          </Icon>
          <Icon size={16}>
            <path d="M1 8h4l6-5v18l-6-5H1zM14 8q3 4 0 8" stroke="#eee" strokeWidth="1.800" />
            <path d="M17.500 5q5 7 0 14M21 3q6 9 0 18" stroke="#777" strokeWidth="1.600" />
          </Icon>
        </div>
        <span className="ml-[10px]">ENG</span>
        <span className="-mr-px ml-3 self-end pb-[3px]">23-</span>
      </div>
    </nav>
  );
}

export default function App() {
  return (
    <div className="relative flex h-screen min-h-[900px] flex-col overflow-hidden bg-[#dbe7f6]">
      <header className="flex h-[23px] shrink-0 items-center bg-[#fdfdfe] font-['Roboto',sans-serif] text-[12px] text-[#1b1b1b]">
        <h1>ectrical - [4632-85051-02.drw - C:\CADMATIC\ElectricProjects\Demo_Video]</h1>
        <button aria-label="Minimize" className="mr-4 ml-auto h-px w-[11px] bg-black" />
      </header>

      <nav className="flex h-[27px] shrink-0 items-center gap-[14px] bg-gradient-to-r from-[#dfe9f6] to-[#eaf4fe] pb-px pl-[10px] font-['Open_Sans',sans-serif] text-[12px] text-[#1a1a1a]">
        {MENUS.map(([before, key, after]) => (
          <button key={before + key + after}>{before}<u className="underline-offset-2">{key}</u>{after}</button>
        ))}
      </nav>

      <Toolbar />

      <div className="flex min-h-0 flex-1 gap-[3px]">
        <ProjectPanel />
        <Workspace />
      </div>

      <Console />
      <StatusBar />
      <Taskbar />

      {/* Caption callout with its pointer */}
      <svg width="124" height="106" viewBox="0 0 124 106" className="pointer-events-none absolute top-[262px] left-[1024px]" aria-hidden>
        <path d="M4 103L121 3" stroke="#d97716" strokeWidth="6" />
      </svg>
      <div className="absolute top-[36px] left-[1142px] flex h-[231px] w-[409px] items-center justify-center border-[6px] border-[#d97716] bg-[#323c46] text-center font-['Inter',sans-serif] text-[42px] leading-[48px] font-light text-white">
        <p>Changing the cable<br />type for selected<br />cables</p>
      </div>
    </div>
  );
}
